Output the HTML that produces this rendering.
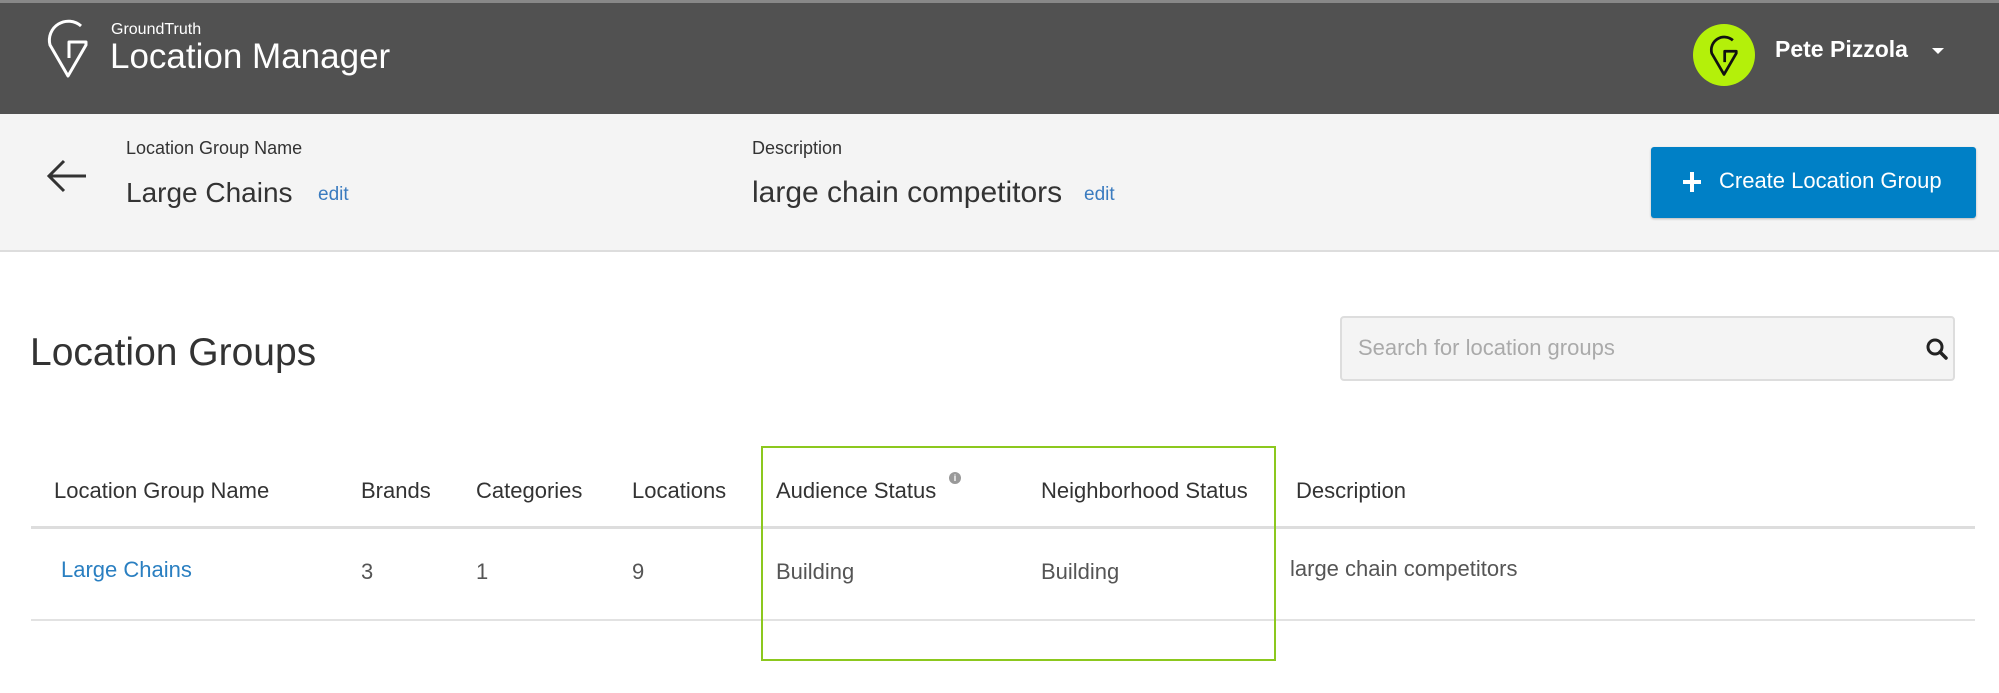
<!DOCTYPE html>
<html><head><meta charset="utf-8">
<style>
*{margin:0;padding:0;box-sizing:border-box}
body{width:1999px;height:693px;background:#fff;font-family:"Liberation Sans Narrow","Liberation Sans",sans-serif;color:#333;position:relative;overflow:hidden}
.a{position:absolute;white-space:nowrap}
.hdr{position:absolute;left:0;top:0;width:1999px;height:114px;background:#515151;border-top:3px solid #888}
.sub{position:absolute;left:0;top:114px;width:1999px;height:138px;background:#f4f4f4;border-bottom:2px solid #ddd}
.th{font-size:22px;color:#333;top:478px}
.td{font-size:22px;color:#555;top:559px}
</style></head><body>
<div class="hdr"></div>
<svg class="a" style="left:46px;top:18px" width="44" height="62" viewBox="0 0 44 62"><path d="M35 8 A19 19 0 0 0 4 27 L22 58 L40 27 L40 24 L23 24 L23 40" fill="none" stroke="#fff" stroke-width="3" stroke-linejoin="round"/></svg>
<div class="a" style="left:111px;top:21px;font-size:16px;color:#fff">GroundTruth</div>
<div class="a" style="left:110px;top:37px;font-size:35px;color:#fff">Location Manager</div>
<div class="a" style="left:1693px;top:24px;width:62px;height:62px;border-radius:50%;background:#b4f00a"></div>
<svg class="a" style="left:1709px;top:34px" width="30" height="44" viewBox="0 0 44 62"><path d="M35 8 A19 19 0 0 0 4 27 L22 58 L40 27 L40 24 L23 24 L23 40" fill="none" stroke="#111" stroke-width="4" stroke-linejoin="round"/></svg>
<div class="a" style="left:1775px;top:36px;font-size:23px;color:#fff;font-weight:bold">Pete Pizzola</div>
<div class="a" style="left:1932px;top:48px;width:0;height:0;border-left:6px solid transparent;border-right:6px solid transparent;border-top:6px solid #fff"></div>

<div class="sub"></div>
<svg class="a" style="left:46px;top:158px" width="42" height="36" viewBox="0 0 42 36"><path d="M40 18 H4 M18 3 L3 18 L18 33" fill="none" stroke="#333" stroke-width="3"/></svg>
<div class="a" style="left:126px;top:138px;font-size:18px;color:#333">Location Group Name</div>
<div class="a" style="left:126px;top:177px;font-size:28px;color:#333">Large Chains</div>
<div class="a" style="left:318px;top:184px;font-size:19px;color:#3a7bbf">edit</div>
<div class="a" style="left:752px;top:138px;font-size:18px;color:#333">Description</div>
<div class="a" style="left:752px;top:176px;font-size:30px;color:#333">large chain competitors</div>
<div class="a" style="left:1084px;top:184px;font-size:19px;color:#3a7bbf">edit</div>
<div class="a" style="left:1651px;top:147px;width:325px;height:71px;background:#0080c6;border-radius:3px;box-shadow:0 1px 2px rgba(0,0,0,.25)"></div>
<div class="a" style="left:1683px;top:180px;width:18px;height:4px;background:#fff"></div>
<div class="a" style="left:1690px;top:172px;width:4px;height:20px;background:#fff"></div>
<div class="a" style="left:1719px;top:168px;font-size:22px;color:#fff">Create Location Group</div>

<div class="a" style="left:30px;top:331px;font-size:39px;color:#333">Location Groups</div>
<div class="a" style="left:1340px;top:316px;width:615px;height:65px;background:#f4f4f4;border:2px solid #ddd;border-radius:4px"></div>
<div class="a" style="left:1358px;top:335px;font-size:22px;color:#aaa">Search for location groups</div>
<svg class="a" style="left:1925px;top:337px" width="24" height="24" viewBox="0 0 24 24"><circle cx="10" cy="10" r="7" fill="none" stroke="#222" stroke-width="3"/><path d="M15 15 L21 21" stroke="#222" stroke-width="3.5" stroke-linecap="round"/></svg>

<div class="a th" style="left:54px">Location Group Name</div>
<div class="a th" style="left:361px">Brands</div>
<div class="a th" style="left:476px">Categories</div>
<div class="a th" style="left:632px">Locations</div>
<div class="a th" style="left:776px">Audience Status</div>
<div class="a" style="left:949px;top:472px;width:12px;height:12px;border-radius:50%;background:#999;color:#fff;font-size:9px;text-align:center;line-height:12px;font-weight:bold">i</div>
<div class="a th" style="left:1041px">Neighborhood Status</div>
<div class="a th" style="left:1296px">Description</div>
<div class="a" style="left:31px;top:526px;width:1944px;height:3px;background:#ddd"></div>
<div class="a td" style="left:61px;top:557px;color:#2a7fc1">Large Chains</div>
<div class="a td" style="left:361px">3</div>
<div class="a td" style="left:476px">1</div>
<div class="a td" style="left:632px">9</div>
<div class="a td" style="left:776px">Building</div>
<div class="a td" style="left:1041px">Building</div>
<div class="a td" style="left:1290px;top:556px">large chain competitors</div>
<div class="a" style="left:31px;top:619px;width:1944px;height:2px;background:#e2e2e2"></div>
<div class="a" style="left:761px;top:446px;width:515px;height:215px;border:2px solid #8cc81e"></div>
</body></html>
